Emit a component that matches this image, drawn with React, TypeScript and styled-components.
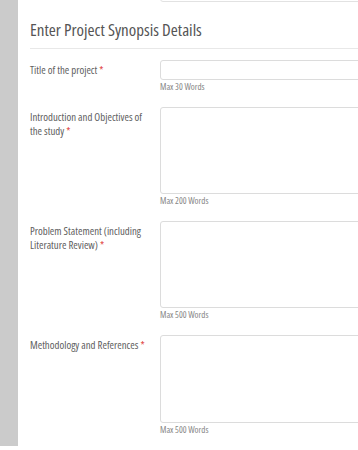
import React from "react";
import styled, { createGlobalStyle } from "styled-components";

const Global = createGlobalStyle`
  html, body { margin: 0; padding: 0; background: #fff; }
  body { font-family: "Open Sans", "Liberation Sans", sans-serif; overflow: hidden; }
`;

const Page = styled.div`
  display: flex;
  width: 358px;
  height: 450px;
  overflow: hidden;
  align-items: flex-start;
`;

const Sidebar = styled.div`
  flex: 0 0 18px;
  height: 446px;
  background: #cbcbcb;
`;

const Panel = styled.div`
  flex: 1;
  padding-left: 12px;
  min-width: 0;
`;

const PrevField = styled.div`
  margin-left: 130px;
  margin-top: -19px;
  height: 19px;
  width: 240px;
  border: 1px solid #e2e2e2;
  border-radius: 3px;
`;

const Heading = styled.h2`
  margin: 0 0 11px;
  padding-top: 16px;
  height: 30px;
  font-size: 17px;
  line-height: 24px;
  font-weight: 400;
  color: #555;
  font-stretch: 75%;
  white-space: nowrap;
  border-bottom: 1px solid #e8e8e8;
`;

const Row = styled.div`
  display: grid;
  grid-template-columns: 130px 240px;
  margin-bottom: 15px;
`;

const Label = styled.div`
  padding-top: 2.6px;
  padding-right: 10px;
  font-size: 10.8px;
  line-height: 14.8px;
  color: #606060;
  font-stretch: 75%;
`;

const Star = styled.span`
  color: #e0403a;
`;

const Field = styled.div<{ $h: number }>`
  height: ${(p) => p.$h}px;
  box-sizing: border-box;
  border: 1px solid #dcdcdc;
  border-radius: 3px;
  background: #fff;
`;

const Help = styled.div`
  margin-top: 1px;
  font-size: 9px;
  line-height: 11px;
  color: #858585;
  font-stretch: 75%;
`;

const rows = [
  { label: "Title of the project", h: 20, help: "Max 30 Words" },
  { label: "Introduction and Objectives of the study", h: 87, help: "Max 200 Words" },
  { label: "Problem Statement (including Literature Review)", h: 87, help: "Max 500 Words" },
  { label: "Methodology and References", h: 88, help: "Max 500 Words" },
];

export default function App() {
  return (
    <>
      <Global />
      <Page>
        <Sidebar />
        <Panel>
          <PrevField />
          <Heading>Enter Project Synopsis Details</Heading>
          {rows.map((r) => (
            <Row key={r.label}>
              <Label>
                {r.label} <Star>*</Star>
              </Label>
              <div>
                <Field $h={r.h} />
                <Help>{r.help}</Help>
              </div>
            </Row>
          ))}
        </Panel>
      </Page>
    </>
  );
}
